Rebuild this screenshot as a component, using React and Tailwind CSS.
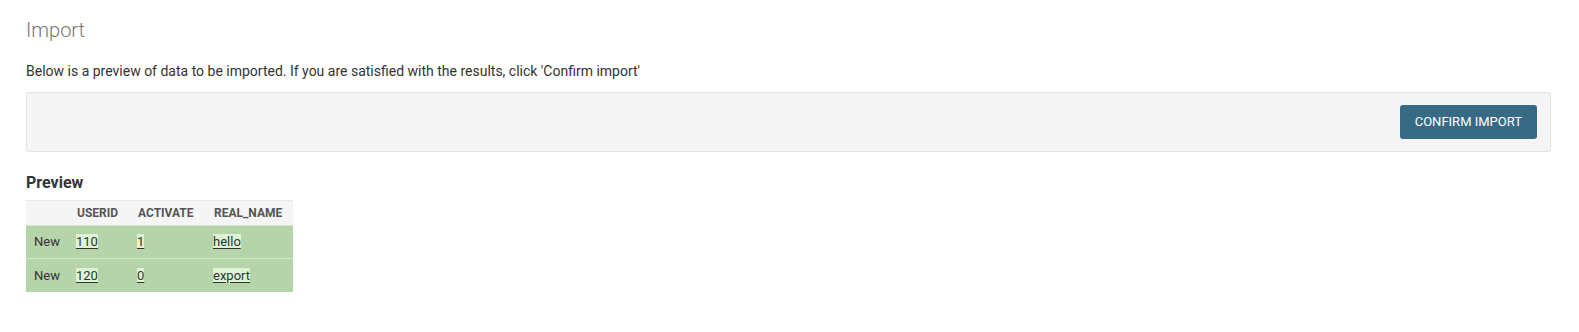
export default function App() {
  const rows = [
    ["110", "1", "hello"],
    ["120", "0", "export"],
  ];
  return (
    <div className="w-full h-[332px] bg-white pl-[26px] pr-[28px] pt-[18px] text-[#333]" style={{ fontFamily: "Roboto, 'Liberation Sans', sans-serif" }}>
      <h1 className="text-[20px] font-light text-[#777] leading-[24px]">Import</h1>
      <p className="mt-[19px] text-[14px] leading-[20px] text-[#333]">
        Below is a preview of data to be imported. If you are satisfied with the results, click 'Confirm import'
      </p>
      <div className="mt-[11px] flex justify-end rounded-[3px] border border-[#e3e3e3] bg-[#f5f5f5] py-[12px] pr-[13px]">
        <button className="h-[34px] rounded-[3px] bg-[#376a84] px-[15px] text-[13px] uppercase text-white">
          Confirm import
        </button>
      </div>
      <h2 className="mt-[21px] text-[16px] font-bold leading-[20px] text-[#333]">Preview</h2>
      <table className="mt-[7px] border-collapse text-[13px]">
        <thead>
          <tr className="h-[25px] bg-[#f5f5f5] border-t border-[#e8e8e8]">
            <th className="w-[43px]"></th>
            <th className="w-[61px] pl-[8px] text-left text-[12px] font-bold text-[#555]">USERID</th>
            <th className="w-[76px] pl-[8px] text-left text-[12px] font-bold text-[#555]">ACTIVATE</th>
            <th className="w-[87px] pl-[8px] pr-[11px] text-left text-[12px] font-bold text-[#555]">REAL_NAME</th>
          </tr>
        </thead>
        <tbody>
          {rows.map((r, i) => (
            <tr key={i} className="h-[33px] bg-[#b5d4aa] border-t border-[#d3e6cc]">
              <td className="pl-[8px] text-[#333]">New</td>
              {r.map((v, j) => (
                <td key={j} className="pl-[7px]">
                  <span className="bg-[#dcf3d4] underline text-[#333] underline-offset-2">{v}</span>
                </td>
              ))}
            </tr>
          ))}
        </tbody>
      </table>
    </div>
  );
}
